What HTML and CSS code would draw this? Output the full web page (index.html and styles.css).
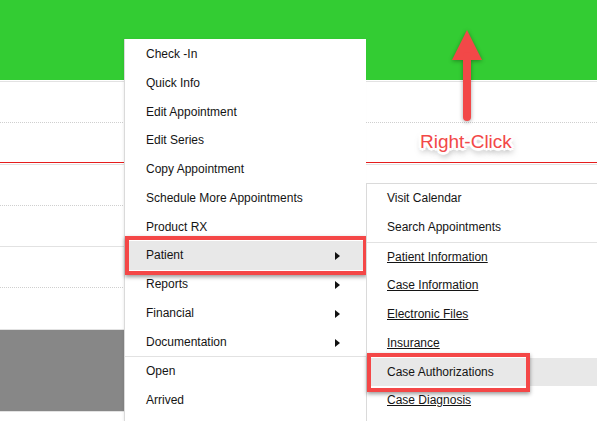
FILE: index.html
```html
<!DOCTYPE html>
<html>
<head>
<meta charset="utf-8">
<link rel="stylesheet" href="styles.css">
</head>
<body>
<div class="page">
  <div class="topbar"></div>
  <div class="row r1"></div>
  <div class="row r2"></div>
  <div class="row r3"></div>
  <div class="row r4"></div>
  <div class="row r5"></div>
  <div class="row r6"></div>
  <div class="block"></div>
</div>

<ul class="menu main">
  <li class="item">Check -In</li>
  <li class="item">Quick Info</li>
  <li class="item">Edit Appointment</li>
  <li class="item">Edit Series</li>
  <li class="item">Copy Appointment</li>
  <li class="item">Schedule More Appointments</li>
  <li class="item">Product RX</li>
  <li class="item sub active"><span>Patient</span><i class="mark"></i></li>
  <li class="item sub">Reports</li>
  <li class="item sub">Financial</li>
  <li class="item sub">Documentation</li>
  <li class="item sep">Open</li>
  <li class="item">Arrived</li>
</ul>

<ul class="menu submenu">
  <li class="item">Visit Calendar</li>
  <li class="item">Search Appointments</li>
  <li class="item sep link">Patient Information</li>
  <li class="item link">Case Information</li>
  <li class="item link">Electronic Files</li>
  <li class="item link">Insurance</li>
  <li class="item active"><span>Case Authorizations</span><i class="mark short"></i></li>
  <li class="item link">Case Diagnosis</li>
</ul>

<div class="annot">
  <svg class="arrow" width="40" height="100" viewBox="0 0 40 100">
    <polygon points="2,32 17,2 32,32" fill="#f24848"/>
    <line x1="17" y1="28" x2="17" y2="89" stroke="#f24848" stroke-width="8" stroke-linecap="round"/>
  </svg>
  <span class="label">Right-Click</span>
</div>
</body>
</html>
```

FILE: styles.css
```css
html, body {
  margin: 0;
  padding: 0;
  background: #fff;
  width: 597px;
  height: 421px;
  overflow: hidden;
  font-family: "Liberation Sans", Arial, sans-serif;
}

.page {
  width: 597px;
}

.topbar {
  height: 80px;
  background: #33cc33;
  margin-bottom: 1px;
}

.row {
  box-sizing: border-box;
}

.r1 {
  border-top: 1px solid #e2e2e2;
  border-bottom: 1px dotted #cfcfcf;
  height: 42px;
}

.r2 {
  height: 40px;
  border-bottom: 1px solid #e51c1c;
  margin-bottom: 1px;
}

.r3 {
  border-top: 1px solid #e2e2e2;
  border-bottom: 1px dotted #cfcfcf;
  height: 42px;
}

.r4 {
  height: 41px;
  border-bottom: 1px solid #e2e2e2;
}

.r5 {
  height: 41px;
  border-bottom: 1px dotted #cfcfcf;
}

.r6 {
  height: 42px;
  border-bottom: 1px solid #e2e2e2;
}

.block {
  width: 124px;
  height: 82px;
  box-sizing: border-box;
  background: #878787;
  border-bottom: 1px solid #e2e2e2;
}

.menu {
  list-style: none;
  margin: 0;
  position: absolute;
  background: #fff;
  font-size: 12px;
  color: #141414;
  box-sizing: border-box;
  overflow: hidden;
}

.main {
  left: 124px;
  top: 39px;
  width: 242px;
  height: 382px;
  padding: 1px 0 0 0;
  border-left: 1px solid #dadada;
  box-shadow: -1px 0 2px rgba(0, 0, 0, 0.06);
}

.submenu {
  left: 366px;
  top: 183px;
  width: 231px;
  height: 238px;
  padding: 0;
  border-left: 1px solid #dadada;
  border-top: 1px solid #dadada;
}

.item {
  position: relative;
  height: 28.75px;
  line-height: 28.75px;
  padding-left: 21px;
  white-space: nowrap;
}

.submenu .item {
  padding-left: 20px;
}

.item.sep {
  border-top: 1px solid #e2e2e2;
}

.item.link {
  text-decoration: underline;
}

.item.sub::after {
  content: "";
  position: absolute;
  right: 26px;
  top: 11px;
  border-left: 5px solid #111;
  border-top: 4px solid transparent;
  border-bottom: 4px solid transparent;
}

.item.active {
  background: #e8e8e8;
}

.main .mark {
  position: absolute;
  top: -5px;
  bottom: -5px;
  left: 0;
  right: -1px;
  border: 4px solid #f44747;
  box-shadow: 0 2px 4px rgba(0, 0, 0, 0.4);
}

.menu {
  overflow: visible;
}

.mark.short {
  position: absolute;
  top: -5px;
  left: 0;
  width: 155px;
  bottom: -6px;
  border: 4px solid #f44747;
  box-shadow: 0 2px 4px rgba(0, 0, 0, 0.4);
}

.annot {
  position: absolute;
  left: 450px;
  top: 28px;
}

.arrow {
  display: block;
  filter: drop-shadow(0 1px 2px rgba(0, 0, 0, 0.35));
}

.label {
  position: absolute;
  left: -30px;
  top: 103px;
  font-size: 19px;
  color: #f24848;
  white-space: nowrap;
  text-shadow:
    -2px 0 0 #fff, 2px 0 0 #fff, 0 -2px 0 #fff, 0 2px 0 #fff,
    -2px -2px 0 #fff, 2px 2px 0 #fff, -2px 2px 0 #fff, 2px -2px 0 #fff,
    -3px 0 1px #fff, 3px 0 1px #fff, 0 3px 1px #fff, 0 -3px 1px #fff,
    1px 4px 6px rgba(0, 0, 0, 0.6);
}
```
